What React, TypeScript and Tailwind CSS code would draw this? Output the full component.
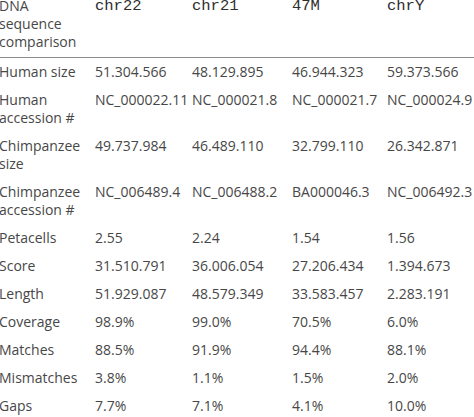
import React from 'react';

const rows: [string[], string[]][] = [
  [['Human size'], ['51.304.566', '48.129.895', '46.944.323', '59.373.566']],
  [['Human', 'accession #'], ['NC_000022.11', 'NC_000021.8', 'NC_000021.7', 'NC_000024.9']],
  [['Chimpanzee', 'size'], ['49.737.984', '46.489.110', '32.799.110', '26.342.871']],
  [['Chimpanzee', 'accession #'], ['NC_006489.4', 'NC_006488.2', 'BA000046.3', 'NC_006492.3']],
  [['Petacells'], ['2.55', '2.24', '1.54', '1.56']],
  [['Score'], ['31.510.791', '36.006.054', '27.206.434', '1.394.673']],
  [['Length'], ['51.929.087', '48.579.349', '33.583.457', '2.283.191']],
  [['Coverage'], ['98.9%', '99.0%', '70.5%', '6.0%']],
  [['Matches'], ['88.5%', '91.9%', '94.4%', '88.1%']],
  [['Mismatches'], ['3.8%', '1.1%', '1.5%', '2.0%']],
  [['Gaps'], ['7.7%', '7.1%', '4.1%', '10.0%']],
];

const cols = 'grid grid-cols-[96px_97px_100px_95px_130px]';

function App() {
  return (
    <div className="w-[474px] h-[417px] overflow-hidden bg-white text-[#474747] font-[family-name:'Open_Sans',sans-serif] text-[14px] leading-[18px]">
      <div className="-ml-[1px] -mt-[3px] w-[520px]">
        <div className={`${cols} pb-[6px] border-b border-[#8c8c8c]`}>
          <div>DNA<br />sequence<br />comparison</div>
          {['chr22', 'chr21', '47M', 'chrY'].map((h) => (
            <div key={h} className="font-[family-name:'Liberation_Mono',monospace] text-[15.5px] text-[#2e2e2e]">{h}</div>
          ))}
        </div>
        {rows.map(([label, vals], i) => (
          <div key={i} className={`${cols} py-[5px]`}>
            <div className="whitespace-nowrap">
              {label.map((l, j) => (
                <div key={j}>{l}</div>
              ))}
            </div>
            {vals.map((v, j) => (
              <div key={j} className="whitespace-nowrap">{v}</div>
            ))}
          </div>
        ))}
      </div>
    </div>
  );
}

export default App;
